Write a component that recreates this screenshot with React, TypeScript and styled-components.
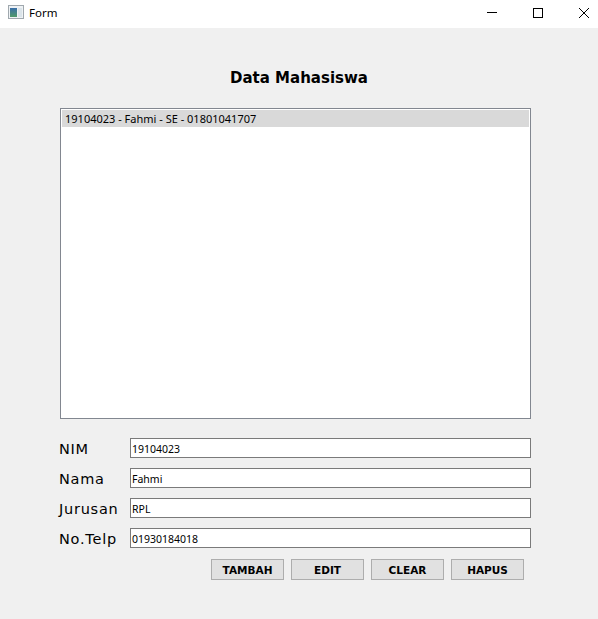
import styled, { createGlobalStyle } from "styled-components"

const Global = createGlobalStyle`
html, body {
  margin: 0;
  padding: 0;
  background: #f0f0f0;
}
* {
  box-sizing: border-box;
}
`

const Window = styled.div`
width: 598px;
height: 619px;
display: flex;
flex-direction: column;
background: #f0f0f0;
overflow: hidden;
`

const TitleBar = styled.header`
height: 28px;
flex: none;
display: flex;
align-items: center;
background: #fff;
padding-left: 8px;
`

const WindowName = styled.span`
font-family: "Noto Sans", "DejaVu Sans", sans-serif;
font-size: 11.5px;
color: #000;
margin-left: 5px;
margin-top: -3px;
`

const AppIcon = styled.svg`
width: 16px;
height: 14px;
margin-top: -4px;
`

const Controls = styled.div`
margin-left: auto;
margin-right: -9px;
display: flex;
height: 100%;
`

const ControlButton = styled.div`
width: 46px;
height: 25px;
display: flex;
align-items: center;
justify-content: center;
`

const Content = styled.main`
flex: 1;
display: flex;
flex-direction: column;
padding: 40px 67px 0 60px;
`

const Heading = styled.h1`
margin: 0 0 19px;
height: 21px;
font-family: "DejaVu Sans", sans-serif;
font-size: 15px;
line-height: 21px;
font-weight: 700;
text-align: center;
color: #000;
padding-left: 7px;
`

const ListBox = styled.div`
height: 311px;
background: #fff;
border: 1px solid #828790;
padding: 1px;
margin-bottom: 19px;
`

const ListItem = styled.div`
height: 17px;
background: #d9d9d9;
padding-left: 3px;
font-family: "Noto Sans", "DejaVu Sans", sans-serif;
font-size: 11px;
line-height: 17px;
color: #000;
white-space: nowrap;
`

const Form = styled.div`
display: flex;
flex-direction: column;
gap: 10px;
`

const Row = styled.div`
display: flex;
align-items: center;
height: 20px;
`

const Label = styled.label`
width: 70px;
flex: none;
font-family: "DejaVu Sans", sans-serif;
font-size: 14.5px;
letter-spacing: 0.75px;
color: #000;
margin: 2px 1px 0 -1px;
white-space: nowrap;
`

const Field = styled.div`
flex: 1;
height: 20px;
background: #fff;
border: 1px solid #7a7a7a;
padding-left: 1px;
font-family: "Noto Sans", "DejaVu Sans", sans-serif;
font-size: 10.5px;
line-height: 20px;
color: #000;
`

const Buttons = styled.div`
display: flex;
gap: 7px;
margin-top: 11px;
padding-left: 151px;
`

const Button = styled.button`
width: 73px;
height: 21px;
padding: 1px 0 0;
background: #e1e1e1;
border: 1px solid #adadad;
font-family: "DejaVu Sans", sans-serif;
font-size: 10.5px;
font-weight: 700;
color: #000;
`

const fields = [
    { label: "NIM", value: "19104023" },
    { label: "Nama", value: "Fahmi" },
    { label: "Jurusan", value: "RPL" },
    { label: "No.Telp", value: "01930184018" },
]

export default function App() {
    return (
        <>
            <Global />
            <Window>
                <TitleBar>
                    <AppIcon viewBox="0 0 16 14">
                        <defs>
                            <linearGradient id="pane" x1="0" y1="0" x2="0" y2="1">
                                <stop offset="0" stopColor="#3a6ea8" />
                                <stop offset="1" stopColor="#4f9a6a" />
                            </linearGradient>
                        </defs>
                        <rect x="0.5" y="0.5" width="15" height="13" fill="#eef2f5" stroke="#a0a8ae" />
                        <rect x="2" y="3" width="7" height="9" fill="url(#pane)" />
                        <rect x="10" y="3" width="4" height="9" fill="#dbe4ea" />
                    </AppIcon>
                    <WindowName>Form</WindowName>
                    <Controls>
                        <ControlButton>
                            <svg width="10" height="10" viewBox="0 0 10 10">
                                <path d="M0 4.5H10" stroke="#000" fill="none" />
                            </svg>
                        </ControlButton>
                        <ControlButton>
                            <svg width="10" height="10" viewBox="0 0 10 10">
                                <rect x="0.5" y="0.5" width="9" height="9" stroke="#000" fill="none" />
                            </svg>
                        </ControlButton>
                        <ControlButton>
                            <svg width="10" height="10" viewBox="0 0 10 10">
                                <path d="M0 0L10 10M10 0L0 10" stroke="#000" fill="none" />
                            </svg>
                        </ControlButton>
                    </Controls>
                </TitleBar>
                <Content>
                    <Heading>Data Mahasiswa</Heading>
                    <ListBox>
                        <ListItem>19104023 - Fahmi - SE - 01801041707</ListItem>
                    </ListBox>
                    <Form>
                        {fields.map((f) => (
                            <Row key={f.label}>
                                <Label>{f.label}</Label>
                                <Field>{f.value}</Field>
                            </Row>
                        ))}
                    </Form>
                    <Buttons>
                        <Button>TAMBAH</Button>
                        <Button>EDIT</Button>
                        <Button>CLEAR</Button>
                        <Button>HAPUS</Button>
                    </Buttons>
                </Content>
            </Window>
        </>
    )
}
